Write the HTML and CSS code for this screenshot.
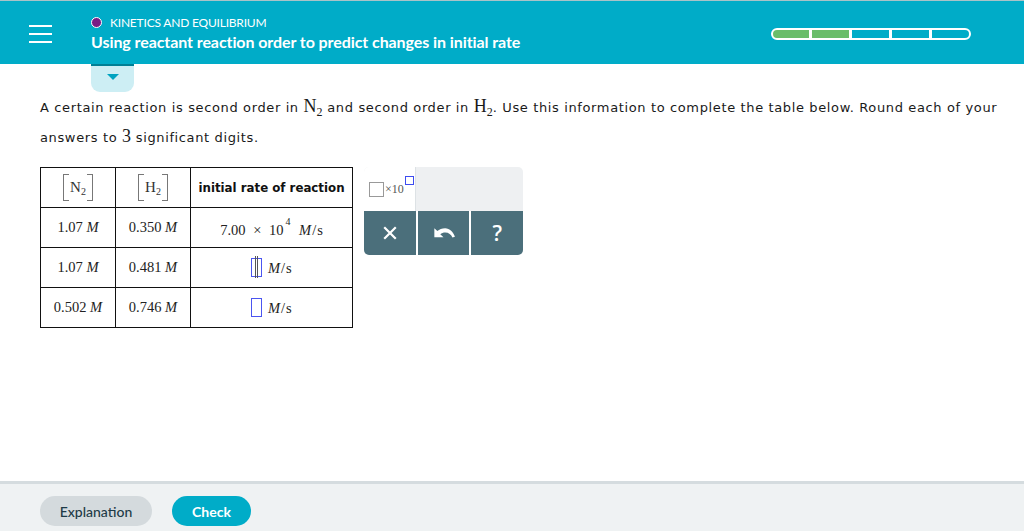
FILE: index.html
```html
<!DOCTYPE html>
<html>
<head>
<meta charset="utf-8">
<link rel="stylesheet" href="styles.css">
</head>
<body>
<div class="page">
  <header class="topbar">
    <div class="hamburger"><span></span><span></span><span></span></div>
    <div class="titles">
      <div class="topic"><span class="dot"></span>KINETICS AND EQUILIBRIUM</div>
      <div class="title">Using reactant reaction order to predict changes in initial rate</div>
    </div>
    <div class="progress">
      <span class="seg done first"></span><span class="seg done"></span><span class="seg"></span><span class="seg"></span><span class="seg last"></span>
    </div>
  </header>
  <div class="tab"><span class="tri"></span></div>

  <main class="content">
    <p class="question">A certain reaction is second order in <span class="m">N<sub>2</sub></span> and second order in <span class="m">H<sub>2</sub></span>. Use this information to complete the table below. Round each of your answers to <span class="m">3</span> significant digits.</p>

    <div class="work">
      <table class="data">
        <tr class="head">
          <td class="c1"><span class="br"><span class="m">N<sub>2</sub></span></span></td>
          <td class="c2"><span class="br"><span class="m">H<sub>2</sub></span></span></td>
          <td class="c3 lbl">initial rate of reaction</td>
        </tr>
        <tr>
          <td class="num">1.07 <i>M</i></td>
          <td class="num">0.350 <i>M</i></td>
          <td class="num">7.00 <span class="times">×</span> 10<sup>4</sup> <i>M</i><span class="sl">/</span>s</td>
        </tr>
        <tr>
          <td class="num">1.07 <i>M</i></td>
          <td class="num">0.481 <i>M</i></td>
          <td class="num"><span class="inbox active"><span class="cursor"></span></span> <i>M</i><span class="sl">/</span>s</td>
        </tr>
        <tr>
          <td class="num">0.502 <i>M</i></td>
          <td class="num">0.746 <i>M</i></td>
          <td class="num"><span class="inbox"></span> <i>M</i><span class="sl">/</span>s</td>
        </tr>
      </table>

      <div class="panel">
        <div class="panel-top">
          <div class="sci"><span class="gbox"></span><span class="x10">×10</span><span class="bbox"></span></div>
          <div class="fill"></div>
        </div>
        <div class="panel-btns">
          <button class="pb"><svg width="14" height="14" viewBox="0 0 14 14"><path d="M2 2 L12 12 M12 2 L2 12" stroke="#fff" stroke-width="2.2" stroke-linecap="square"/></svg></button>
          <button class="pb"><svg width="25" height="14" viewBox="0 0 22 13"><path d="M12.5 2c-2.9 0-5.4 1-7.2 2.6L2.5 2v8.5h8.5L8 7.6c1.3-1 2.8-1.6 4.6-1.6 3.1 0 5.7 1.9 6.7 4.7l2.3-.8C20.2 5.7 16.7 2 12.5 2z" fill="#fff"/></svg></button>
          <button class="pb q">?</button>
        </div>
      </div>
    </div>
  </main>

  <footer class="footer">
    <button class="btn expl">Explanation</button>
    <button class="btn check">Check</button>
  </footer>
</div>
</body>
</html>
```

FILE: styles.css
```css
* { box-sizing: border-box; }
html, body { margin: 0; padding: 0; }
body { background: #fff; font-family: "DejaVu Sans", Verdana, sans-serif; color: #222; }
.page { height: 531px; display: flex; flex-direction: column; }

.topbar {
  height: 64px;
  background: #00acc8;
  border-top: 1px solid #a9c3c8;
  display: flex;
  align-items: flex-start;
}
.hamburger { margin: 24px 0 0 29px; width: 23px; display: flex; flex-direction: column; gap: 6px; }
.hamburger span { display: block; height: 2px; background: #fff; }
.titles { margin: 14px 0 0 39px; font-family: Lato, "Open Sans", sans-serif; color: #fff; }
.topic { font-size: 12px; display: flex; align-items: center; height: 14px; letter-spacing: -0.2px; }
.dot { width: 11px; height: 11px; border-radius: 50%; background: #7a1c85; border: 1.5px solid #fff; margin: 0 8px 0 0; }
.title { font-size: 16px; font-weight: 700; margin-top: 3px; letter-spacing: -0.08px; }
.progress { margin: 27px 53px 0 auto; display: flex; }
.seg { width: 40px; height: 12px; border: 2px solid #fff; }
.seg + .seg { border-left-width: 1px; }
.seg.done { background: #6abd6a; }
.seg.first { border-radius: 6px 0 0 6px; }
.seg.last { border-radius: 0 6px 6px 0; }

.tab {
  margin-left: 91px; width: 43px; height: 28px;
  background: #cdeef4; border-top: 2px solid #007f95;
  border-radius: 0 0 9px 9px;
  display: flex; justify-content: center; padding-top: 8px;
}
.tri { width: 0; height: 0; border-left: 6px solid transparent; border-right: 6px solid transparent; border-top: 6px solid #00a3c0; }

.content { flex: 1; padding-left: 40px; }
.question { margin: 0; padding-top: 1px; font-size: 13px; line-height: 30px; color: #1a1a1a; width: 975px; letter-spacing: 0.63px; }
.m { font-family: "Liberation Serif", serif; font-size: 16px; }
.question .m { font-size: 18px; letter-spacing: 0; line-height: 20px; }
.m sub { font-size: 12px; vertical-align: -4px; line-height: 1; }

.work { display: flex; align-items: flex-start; margin-top: 14px; gap: 11px; }
.data { border-collapse: collapse; font-family: "Liberation Serif", serif; }
.data td { border: 1px solid #111; height: 40px; text-align: center; padding: 0; font-size: 14.5px; color: #222; }
.data td:nth-child(1) { width: 75px; }
.data td:nth-child(2) { width: 75px; }
.data td:nth-child(3) { width: 162px; }
.data td.lbl { font-family: "DejaVu Sans", sans-serif; font-weight: 700; font-size: 11.8px; color: #111; letter-spacing: 0; }
.br { display: inline-block; position: relative; padding: 0 7px; height: 27px; line-height: 26px; vertical-align: middle; }
.br::before, .br::after { content: ""; position: absolute; top: 0; bottom: 0; width: 5px; border: 1.5px solid #777; }
.br::before { left: 0; border-right: none; }
.br::after { right: 0; border-left: none; }
.br .m { font-size: 15px; color: #333; }
.br .m sub { font-size: 10px; vertical-align: -3px; }
.num i { font-family: "Liberation Serif", serif; }
.sl { margin: 0 1px; }
.times { margin: 0 4px; }
.num sup { font-size: 10px; vertical-align: 10px; line-height: 1; margin: 0 5px 0 2px; }
.inbox { display: inline-block; width: 11px; height: 19px; border: 1.5px solid #4b55f0; vertical-align: -4px; position: relative; margin-right: 2px; }
.cursor { position: absolute; left: 3px; top: -3px; width: 3px; height: 22px; border-left: 1px solid #555; border-right: 1px solid #555; }

.panel { width: 159px; border-radius: 5px; overflow: hidden; }
.panel-top { display: flex; height: 44px; background: #eef0f2; }
.sci { width: 52px; background: #fff; border-right: 1px solid #dde2e5; position: relative; }
.gbox { position: absolute; left: 5px; top: 15px; width: 15px; height: 15px; border: 1.5px solid #999; }
.x10 { position: absolute; left: 21px; top: 15px; font-family: "Liberation Serif", serif; font-size: 12px; color: #555; }
.bbox { position: absolute; left: 41px; top: 9px; width: 9px; height: 9px; border: 1.5px solid #3d4cf0; }
.panel-btns { display: flex; gap: 2px; height: 44px; }
.pb { flex: 1; border: none; background: #4b6f7b; padding: 0; display: flex; align-items: center; justify-content: center; color: #fff; }
.pb.q { font-family: "Open Sans", sans-serif; font-weight: 600; font-size: 21px; }

.footer { height: 50px; border-top: 3px solid #d5dcdf; background: #eff2f3; display: flex; align-items: flex-start; padding: 12px 0 0 40px; gap: 20px; }
.btn { height: 30px; border: none; border-radius: 15px; font-family: Lato, "Open Sans", sans-serif; font-size: 14px; }
.expl { width: 112px; background: #d4dadd; color: #1e3a47; font-weight: 500; }
.check { width: 79px; background: #00acc8; color: #fff; font-weight: 700; }
```
